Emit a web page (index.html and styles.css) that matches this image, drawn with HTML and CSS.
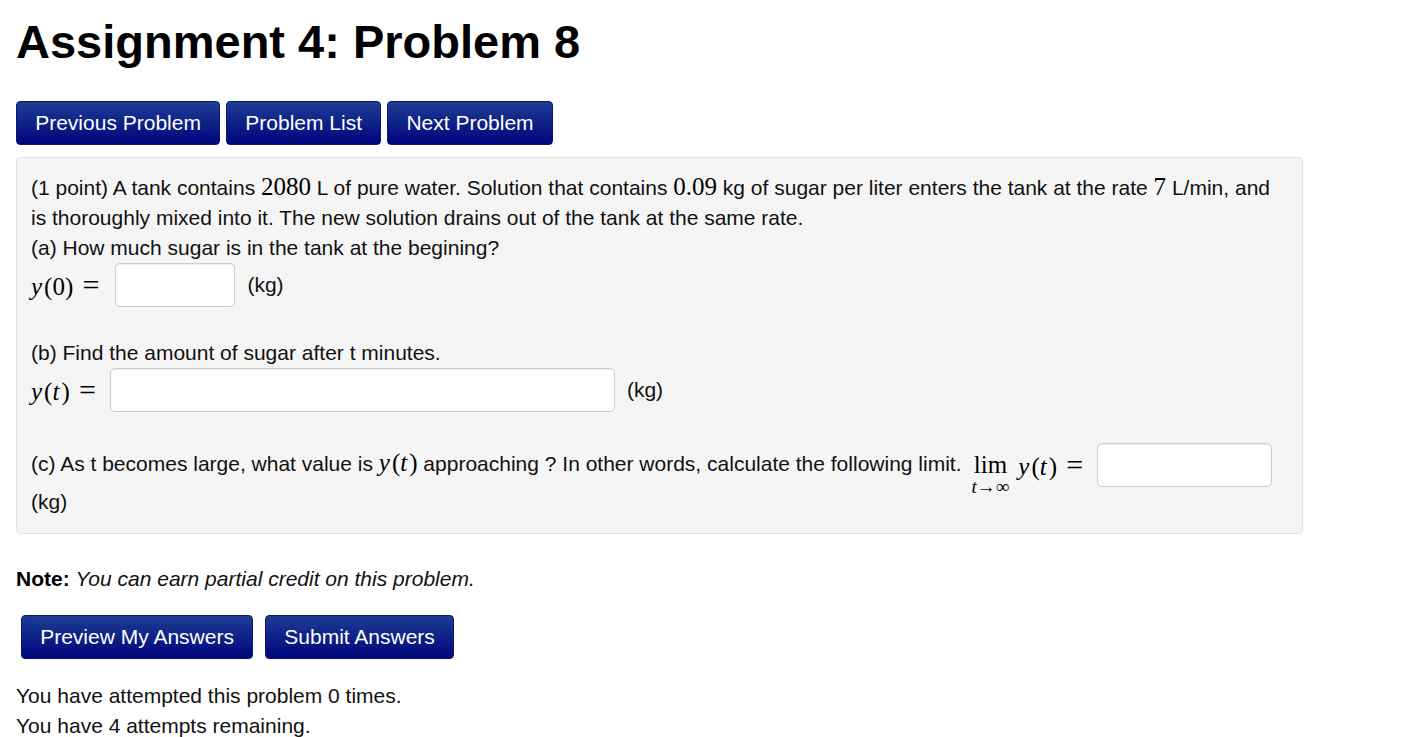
FILE: index.html
```html
<!DOCTYPE html>
<html>
<head>
<meta charset="utf-8">
<title>Assignment 4: Problem 8</title>
<link rel="stylesheet" href="styles.css">
</head>
<body>
<div class="page">
  <h1 class="title">Assignment 4: Problem 8</h1>
  <div class="nav">
    <a class="btn">Previous Problem</a>
    <a class="btn">Problem List</a>
    <a class="btn">Next Problem</a>
  </div>
  <div class="problem">
    <div class="text">(1 point) A tank contains <span class="m">2080</span> L of pure water. Solution that contains <span class="m">0.09</span> kg of sugar per liter enters the tank at the rate <span class="m">7</span> L/min, and is thoroughly mixed into it. The new solution drains out of the tank at the same rate.<br>(a) How much sugar is in the tank at the begining?</div>
    <div class="row row-a">
      <span class="m lhs"><i>y</i>(0) <span class="eq">=</span></span>
      <span class="field w-a"></span>
      <span class="unit">(kg)</span>
    </div>
    <div class="text gap">(b) Find the amount of sugar after t minutes.</div>
    <div class="row row-b">
      <span class="m lhs"><i>y</i>(<i>t</i>) <span class="eq">=</span></span>
      <span class="field w-b"></span>
      <span class="unit">(kg)</span>
    </div>
    <div class="row row-c gap">
      <span class="ctext">(c) As t becomes large, what value is <span class="m"><i>y</i>(<i>t</i>)</span> approaching ? In other words, calculate the following limit.</span>
      <span class="lim"><span class="lim-word">lim</span><span class="lim-sub"><i>t</i>→∞</span></span>
      <span class="m lhs"><i>y</i>(<i>t</i>) <span class="eq">=</span></span>
      <span class="field w-c"></span>
    </div>
    <div class="text">(kg)</div>
  </div>
  <p class="note"><b>Note:</b> <i>You can earn partial credit on this problem.</i></p>
  <div class="actions">
    <a class="btn">Preview My Answers</a>
    <a class="btn">Submit Answers</a>
  </div>
  <div class="attempts">
    <div>You have attempted this problem 0 times.</div>
    <div>You have 4 attempts remaining.</div>
  </div>
</div>
</body>
</html>
```
FILE: styles.css
```css
html, body {
  margin: 0;
  padding: 0;
  background: #ffffff;
}
body {
  font-family: "Liberation Sans", Arial, sans-serif;
  font-size: 21px;
  color: #111111;
}
.page {
  padding: 0 16px;
}
.title {
  font-size: 47px;
  font-weight: bold;
  color: #000000;
  line-height: 52px;
  margin: 16px 0 0 0;
}
.nav {
  display: flex;
  gap: 6px;
  margin-top: 33px;
}
.btn {
  display: inline-flex;
  align-items: center;
  height: 44px;
  box-sizing: border-box;
  padding: 0 18.2px;
  color: #ffffff;
  font-size: 21px;
  background: linear-gradient(#1d3d92, #00057d);
  border: 1px solid #0b1a6a;
  border-radius: 4px;
}
.problem {
  margin-top: 12px;
  background: #f5f5f5;
  border: 1px solid #e3e3e3;
  border-radius: 4px;
  padding: 14px 14px 16px 14px;
  width: 1257px;
}
.text {
  line-height: 30px;
}
.gap {
  margin-top: 31px;
}
.m {
  font-family: "Liberation Serif", "Times New Roman", serif;
  font-size: 25px;
  color: #000000;
}
.m i {
  font-style: italic;
  margin-right: 2px;
}
.eq {
  margin-left: 3px;
  font-size: 30px;
  line-height: 1;
}
.row {
  display: flex;
  align-items: center;
  height: 44px;
}
.field {
  display: inline-block;
  height: 44px;
  box-sizing: border-box;
  background: #ffffff;
  border: 1px solid #cccccc;
  border-radius: 5px;
  box-shadow: inset 0 1px 1px rgba(0,0,0,0.075);
}
.row-a .lhs { margin-right: 16px; }
.w-a { width: 120px; }
.row-a .unit { margin-left: 12px; }
.row-b .lhs { margin-right: 14px; }
.w-b { width: 505px; }
.row-b .unit { margin-left: 12px; }
.row-c .lhs { margin-right: 14px; }
.ctext {
  line-height: 30px;
  margin-top: -4px;
}
.lim {
  display: inline-flex;
  flex-direction: column;
  align-items: center;
  margin: 0 9px -14px 10px;
  font-family: "Liberation Serif", "Times New Roman", serif;
  color: #000000;
}
.lim-word {
  font-size: 25px;
  line-height: 30px;
}
.lim-sub {
  font-size: 19px;
  line-height: 14px;
}
.w-c { width: 175px; }
.note {
  margin: 30px 0 0 0;
  line-height: 30px;
  color: #111111;
}
.note b { color: #000000; }
.actions {
  display: flex;
  gap: 12px;
  margin: 21px 0 0 5px;
}
.attempts {
  margin-top: 22px;
  line-height: 30px;
}
```
